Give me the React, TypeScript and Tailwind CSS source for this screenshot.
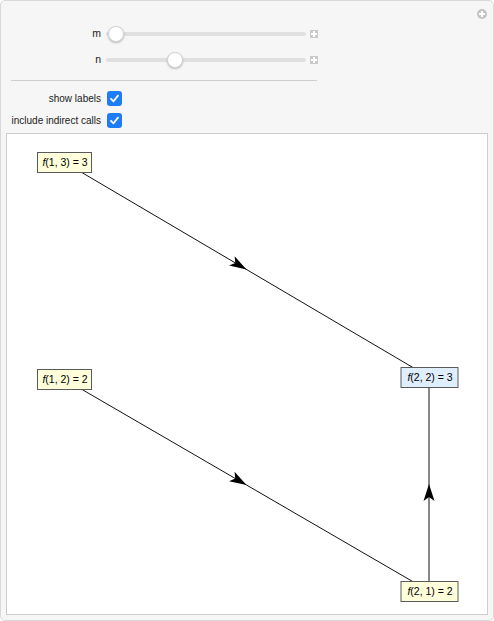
import React from 'react'

type Pt = [number, number]

const nodes = [
    { id: 'a', x: 57, y: 28, w: 54, label: '(1, 3) = 3', fill: '#ffffdc' },
    { id: 'b', x: 57, y: 245, w: 54, label: '(1, 2) = 2', fill: '#ffffdc' },
    { id: 'c', x: 422, y: 243, w: 57, label: '(2, 2) = 3', fill: '#dfeefc' },
    { id: 'd', x: 422, y: 457, w: 57, label: '(2, 1) = 2', fill: '#ffffdc' },
]

function arrowHead(from: Pt, to: Pt) {
    const mx = (from[0] + to[0]) / 2
    const my = (from[1] + to[1]) / 2
    const dx = to[0] - from[0]
    const dy = to[1] - from[1]
    const len = Math.hypot(dx, dy)
    const ux = dx / len
    const uy = dy / len
    const px = -uy
    const py = ux
    const back = 17
    const notch = 13
    const half = 5.5
    const pts: Pt[] = [
        [mx, my],
        [mx - ux * back + px * half, my - uy * back + py * half],
        [mx - ux * notch, my - uy * notch],
        [mx - ux * back - px * half, my - uy * back - py * half],
    ]
    return pts.map(p => p.join(',')).join(' ')
}

function Slider({ label, pos }: { label: string; pos: number }) {
    return (
        <div className="flex items-center h-[15px]">
            <div className="w-[100px] text-right text-[10.5px] text-[#222]">{label}</div>
            <div className="relative ml-[5px] w-[200px] h-[15px] flex items-center">
                <div className="w-full h-[4px] rounded-full bg-[#e0e0e0]" />
                <div
                    className="absolute top-0 w-[16px] h-[16px] -mt-[0.5px] rounded-full bg-white border border-[#d4d4d4] shadow-[0_1px_2px_rgba(0,0,0,0.25)]"
                    style={{ left: pos }}
                />
            </div>
            <div className="ml-[4px] w-[8px] h-[8px] bg-[#c9c9c9] flex items-center justify-center relative">
                <div className="absolute w-[6px] h-[2px] bg-white" />
                <div className="absolute w-[2px] h-[6px] bg-white" />
            </div>
        </div>
    )
}

function Check({ label }: { label: string }) {
    return (
        <div className="flex items-center h-[16px]">
            <div className="w-[100px] text-right text-[10px] text-[#222] whitespace-nowrap">{label}</div>
            <div className="ml-[6px] w-[15px] h-[15px] rounded-[3px] bg-[#1f7cf7] flex items-center justify-center">
                <svg width="11" height="11" viewBox="0 0 11 11">
                    <path d="M2 5.8 L4.5 8.3 L9 2.6" stroke="white" strokeWidth="1.8" fill="none" strokeLinecap="round" strokeLinejoin="round" />
                </svg>
            </div>
        </div>
    )
}

export default function App() {
    const byId = Object.fromEntries(nodes.map(n => [n.id, n]))
    const edges: [string, string][] = [['a', 'c'], ['b', 'd'], ['d', 'c']]

    return (
        <div className="w-[494px] h-[621px] bg-white" style={{ fontFamily: '"Liberation Sans", Arial, sans-serif' }}>
            <div className="relative w-[494px] h-[621px] rounded-[5px] border border-[#d9d9d9] bg-[#f6f6f6] flex flex-col">
                <div className="absolute right-[6px] top-[8px] w-[10px] h-[10px] rounded-full bg-[#c4c4c4] flex items-center justify-center">
                    <div className="absolute w-[6px] h-[2px] bg-white" />
                    <div className="absolute w-[2px] h-[6px] bg-white" />
                </div>

                <div className="pt-[25px] flex flex-col gap-[11px]">
                    <Slider label="m" pos={2} />
                    <Slider label="n" pos={61} />
                </div>

                <div className="ml-[10px] mt-[13px] w-[306px] h-px bg-[#cfcfcf]" />

                <div className="mt-[9px] flex flex-col gap-[6px]">
                    <Check label="show labels" />
                    <Check label="include indirect calls" />
                </div>

                <div className="ml-[5px] mt-[5px] w-[482px] h-[482px] bg-white border border-[#cdcdcd]">
                    <svg width="480" height="480" viewBox="0 0 480 480">
                        {edges.map(([f, t]) => {
                            const a = byId[f]
                            const b = byId[t]
                            return (
                                <g key={f + t}>
                                    <line x1={a.x} y1={a.y} x2={b.x} y2={b.y} stroke="#111" strokeWidth="1" />
                                    <polygon points={arrowHead([a.x, a.y], [b.x, b.y])} fill="#000" />
                                </g>
                            )
                        })}
                        {nodes.map(n => (
                            <g key={n.id}>
                                <rect x={n.x - n.w / 2 + 0.5} y={n.y - 10 + 0.5} width={n.w} height={20} fill={n.fill} stroke="#5a5a5a" strokeWidth="1" />
                                <text x={n.x + 1} y={n.y + 4} textAnchor="middle" fontSize="10.5" fill="#000" fontFamily='"Liberation Sans", Arial, sans-serif'>
                                    <tspan fontStyle="italic">f</tspan>{n.label}
                                </text>
                            </g>
                        ))}
                    </svg>
                </div>
            </div>
        </div>
    )
}
